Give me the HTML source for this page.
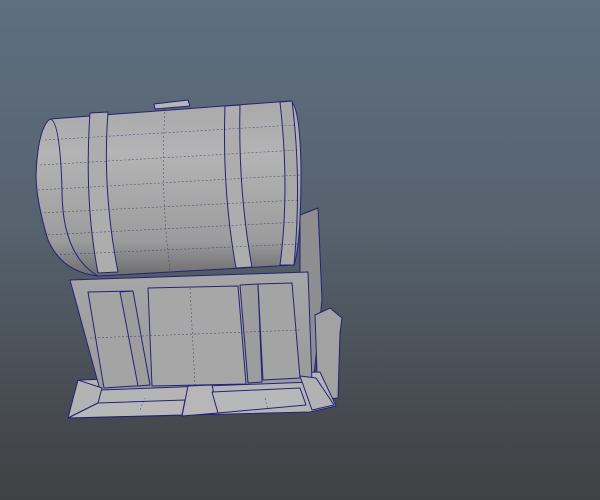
<!DOCTYPE html>
<html><head><style>
html,body{margin:0;padding:0;width:600px;height:500px;overflow:hidden}
body{background:linear-gradient(#5f6f80 0%,#56626e 45%,#474c52 80%,#3f4143 100%)}
svg{position:absolute;left:0;top:0}
</style></head><body>
<svg width="600" height="500" viewBox="0 0 600 500">
<defs>
<linearGradient id="lid" x1="0" y1="0" x2="0" y2="1">
<stop offset="0" stop-color="#a9a9aa"/><stop offset="0.3" stop-color="#b4b4b5"/><stop offset="0.8" stop-color="#9c9c9d"/><stop offset="1" stop-color="#6d6d70"/></linearGradient>
<linearGradient id="box" x1="0" y1="0" x2="0" y2="1">
<stop offset="0" stop-color="#a6a6a7"/><stop offset="1" stop-color="#9a9a9b"/></linearGradient>
</defs>
<g stroke="#232377" stroke-width="1" stroke-linejoin="round">
<path d="M300,215 L318,208 L322,300 L314,375 L300,372 Z" fill="#8e8e90"/>
<path d="M315,315 L330,308 L342,318 L340,333 L338,398 L318,400 Z" fill="#a2a2a3"/>
<!-- base slab -->
<path d="M80,380 L320,372 L336,406 L310,412 L70,418 Z" fill="#b5b5b6"/>
<!-- box body -->
<path d="M70,280 L308,272 L312,382 L100,390 Z" fill="url(#box)"/>
<path d="M88,292 L132,291 L150,385 L104,388 Z" fill="#a4a4a5"/>
<path d="M120,292 L133,291 L150,385 L138,386 Z" fill="#9d9d9e"/>
<path d="M240,285 L258,284 L262,382 L248,383 Z" fill="#9d9d9e"/>
<path d="M258,284 L292,283 L300,378 L263,380 Z" fill="#a4a4a5"/>
<path d="M148,288 L238,286 L246,384 L152,386 Z" fill="#a7a7a8"/>
<!-- base pieces -->
<path d="M78,380 L102,388 L98,403 L68,418 Z" fill="#b3b3b4"/>
<path d="M98,403 L185,400 L182,415 L68,418 Z" fill="#b8b8b9"/>
<path d="M188,386 L212,385 L218,413 L182,416 Z" fill="#b7b7b8"/>
<path d="M212,392 L300,388 L306,405 L218,413 Z" fill="#b8b8b9"/>
<path d="M300,376 L316,378 L334,405 L312,410 Z" fill="#b2b2b3"/>
<!-- lid -->
<path d="M50,119 L290,101 Q300,104 301,170 Q301,245 294,265 L98,276 Q62,272 48,240 Q36,200 36,175 Q38,128 50,119 Z" fill="url(#lid)"/>
<path d="M50,119 Q60,120 62,190 Q62,255 98,276" fill="none"/>
<path d="M90,113 L108,112 Q102,190 118,272 L98,273 Q84,200 90,113 Z" fill="#adadae"/>
<path d="M225,106 L240,105 Q238,190 252,267 L236,268 Q222,190 225,106 Z" fill="#adadae"/>
<path d="M280,102 L292,101 Q302,180 294,265 L280,265 Q290,190 280,102 Z" fill="#a8a8a9"/>
<path d="M154,104 L188,100 L190,106 L155,109 Z" fill="#b6b6b7"/>
</g>
<g stroke="#2c2c6a" stroke-width="0.6" stroke-dasharray="2,2" fill="none" opacity="0.7">
<path d="M45,140 L295,125"/><path d="M40,165 L298,150"/><path d="M38,190 L300,175"/>
<path d="M40,213 L300,200"/><path d="M44,235 L300,222"/><path d="M52,255 L298,244"/>
<path d="M165,108 Q160,190 170,270"/>
<path d="M190,288 L195,385"/><path d="M90,338 L300,330"/><path d="M140,410 L145,398"/><path d="M265,398 L268,410"/>
</g>
</svg>
</body></html>
